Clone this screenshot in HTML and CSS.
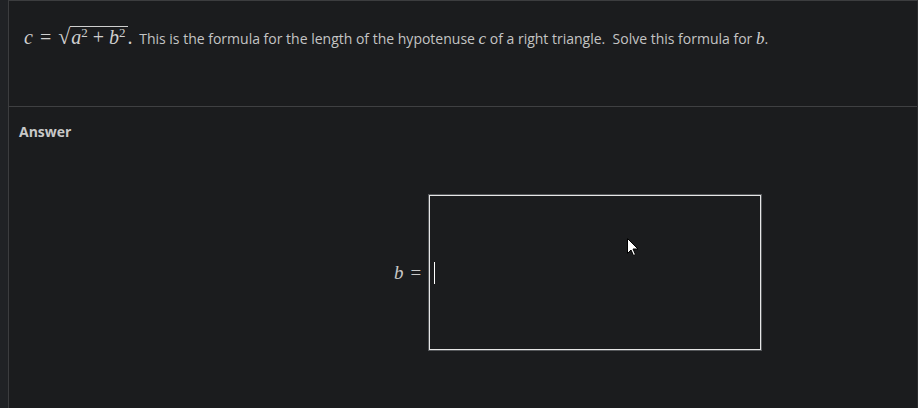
FILE: index.html
```html
<!DOCTYPE html>
<html>
<head>
<meta charset="utf-8">
<link rel="stylesheet" href="styles.css">
</head>
<body>
<div class="page">
  <div class="gutter"></div>
  <div class="main">
    <div class="question">
      <span class="math"><i>c</i><span class="op">=</span><span class="sqrt"><span class="rad">√</span><span class="under"><i>a</i><sup>2</sup><span class="op sm">+</span><i>b</i><sup>2</sup></span></span>.</span>
      <span class="text">This is the formula for the length of the hypotenuse <i class="mv">c</i> of a right triangle.&nbsp; Solve this formula for <i class="mv">b</i>.</span>
    </div>
    <div class="answer">
      <div class="label">Answer</div>
      <div class="row">
        <span class="lhs"><i>b</i><span class="op">=</span></span>
        <div class="box"><span class="caret"></span></div>
      </div>
    </div>
  </div>
</div>
<svg class="cursor" width="12" height="19" viewBox="0 0 12 19"><path d="M0.5 0.5 L0.5 15.5 L4 12 L6.5 17.5 L8.5 16.5 L6 11 L11 11 Z" fill="#fff" stroke="#000" stroke-width="1"/></svg>
</body>
</html>
```
FILE: styles.css
```css
html, body { margin: 0; padding: 0; background: #1b1c1e; }
body { width: 918px; height: 408px; overflow: hidden; font-family: "Open Sans", "Liberation Sans", sans-serif; color: #c4c4c4; }
.page { display: flex; height: 408px; }
.gutter { width: 8px; background: #202225; border-right: 1px solid #3c3d3f; flex: none; }
.main { flex: 1; border-top: 1px solid #3c3d3f; border-right: 1px solid #2a2b2d; display: flex; flex-direction: column; }
.question { height: 106px; border-bottom: 1px solid #3f4042; padding: 25px 0 0 15px; box-sizing: border-box; font-size: 14px; white-space: nowrap; }
.math { font-family: "Liberation Serif", serif; font-size: 20px; color: #cfcfcf; }
.math i, .lhs i, .mv { font-family: "Liberation Serif", serif; font-style: italic; }
.mv { font-size: 17px; color: #cfcfcf; }
.op { margin: 0 7px; }
.op.sm { margin: 0 5px; }
.sqrt { display: inline-flex; align-items: flex-end; }
.rad { font-size: 22px; line-height: 21px; }
.under { border-top: 1px solid #cfcfcf; padding: 0 2px 0 1px; line-height: 20px; }
.under sup { font-size: 13px; vertical-align: 7px; line-height: 0; }
.text { margin-left: 3px; }
.answer { flex: 1; padding: 15px 0 0 10px; }
.label { font-weight: bold; font-size: 14px; color: #c8c8c8; }
.row { display: flex; align-items: center; margin-top: 54px; padding-left: 375px; }
.lhs { font-family: "Liberation Serif", serif; font-size: 19px; color: #c8c8c8; margin-right: 8px; }
.lhs .op { margin-right: 0; }
.box { width: 330px; height: 153px; border: 1px solid #e6e6e6; box-shadow: 0 0 0 1px #55575a; display: flex; align-items: center; }
.caret { width: 1px; height: 22px; background: #ffffff; margin-left: 4px; }
.cursor { position: absolute; left: 627px; top: 238px; }
```
